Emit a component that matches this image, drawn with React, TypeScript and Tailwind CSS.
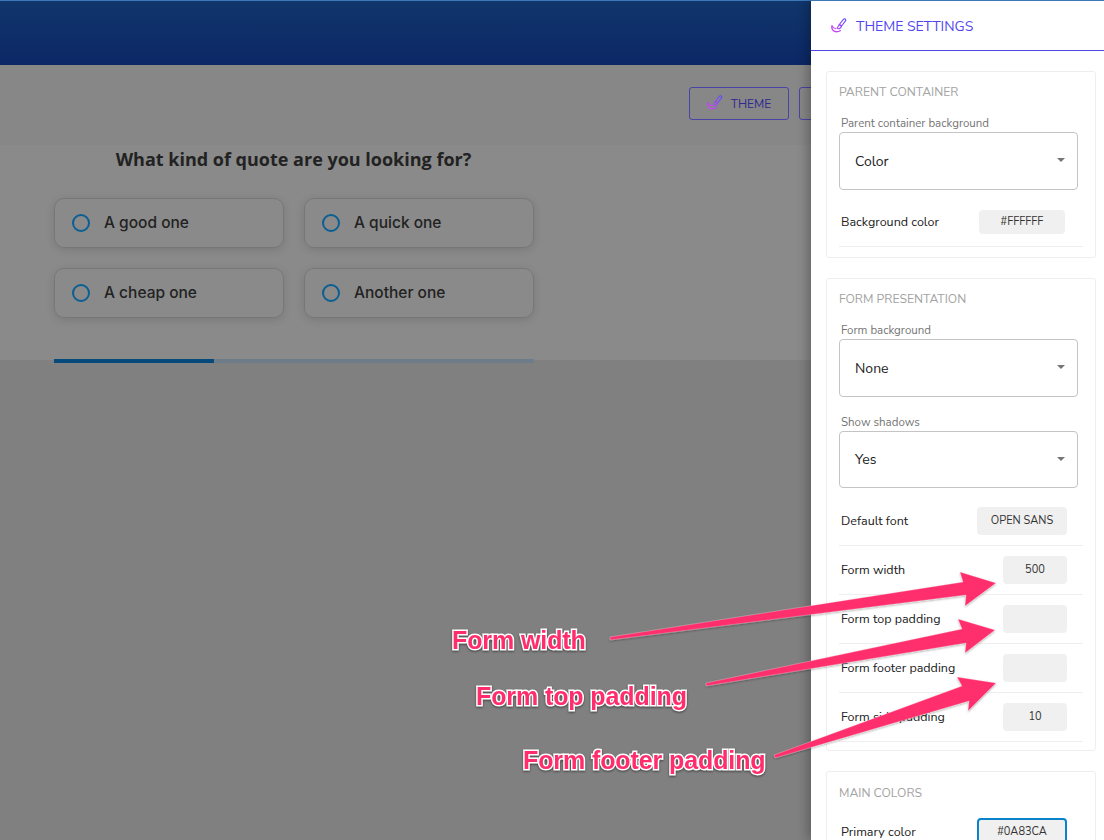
const panelFont = "font-['Nunito_Sans','Lato','Noto_Sans',sans-serif]";

function BrushIcon({ id, className }: { id: string; className?: string }) {
  return (
    <svg viewBox="0 0 16 17" fill="none" className={className}>
      <defs>
        <linearGradient id={id} x1="14" y1="1" x2="2" y2="15" gradientUnits="userSpaceOnUse">
          <stop offset="0" stopColor="#5b4bff" />
          <stop offset="1" stopColor="#d946ef" />
        </linearGradient>
      </defs>
      <g stroke={`url(#${id})`} strokeLinecap="round" strokeLinejoin="round">
        <path d="M12.6 1.2a1.3 1.3 0 0 1 2.1 1.4L10.6 8 8.3 6.5z" strokeWidth="1.1" />
        <path d="M8.3 6.5 10.6 8c-.4 1.7-1.7 2.7-3.5 2.7-.7 0-.9-.3-.7-.9z" strokeWidth="1.1" />
        <path d="M1 8c-.6 2.8 1 5.7 4.2 5.7 1.6 0 3-.3 4-1" strokeWidth="1.4" />
        <path d="M1 8c1 1.4 2.2 2.4 4 2.8" strokeWidth="1.1" />
      </g>
    </svg>
  );
}

function Option({ label }: { label: string }) {
  return (
    <div className="flex h-[50px] items-center rounded-[10px] border border-[#777777] pl-[17px] shadow-[0_2px_8px_rgba(0,0,0,0.12)]">
      <span className="h-[18px] w-[18px] rounded-full border-2 border-[#0b5f92]" />
      <span className="ml-[14px] font-['Inter',sans-serif] text-[15.5px] leading-none font-medium text-[#222222]">{label}</span>
    </div>
  );
}

function SelectField({ label, value, short, className }: { label: string; value: string; short?: boolean; className?: string }) {
  return (
    <div className={className}>
      <div className="mb-[2px] pl-[2px] text-[11.5px] leading-[13px] text-[#757575]">{label}</div>
      <div
        className={
          'flex w-[239px] items-center justify-between rounded-[4px] border border-[#c4c4c4] pr-[12px] pl-[15px] text-[14px] text-[#222222] ' +
          (short ? 'h-[57px]' : 'h-[58px]')
        }
      >
        <span>{value}</span>
        <span className="mb-[2px] h-0 w-0 border-x-[4px] border-t-[4px] border-x-transparent border-t-[#757575]" />
      </div>
    </div>
  );
}

function SettingRow({ label, value, wide, active, small }: { label: string; value?: string; wide?: boolean; active?: boolean; small?: boolean }) {
  return (
    <div className={'flex h-[49px] items-center justify-between border-b border-[#eeeeee] pl-[2px] ' + (small ? 'pr-[18px]' : 'pr-[16px]')}>
      <span className="text-[12.5px] text-[#222222]">{label}</span>
      <span
        className={
          'flex items-center justify-center rounded-[4px] text-[11px] text-[#333333] ' +
          (small ? 'h-[24px] w-[86px] ' : wide ? 'h-[28px] w-[90px] ' : 'h-[28px] w-[64px] ') +
          (active ? 'border-2 border-[#0a83ca] bg-[#f0f0f0]' : 'bg-[#f0f0f0]')
        }
      >
        {value}
      </span>
    </div>
  );
}

function SettingsCard({ title, children, className }: { title: string; children: React.ReactNode; className?: string }) {
  return (
    <section className={'w-[270px] rounded-[3px] border border-[#eeeeee] px-[12px] pt-[13px] ' + (className ?? '')}>
      <h3 className="text-[12.2px] leading-[15px] font-normal text-[#a3a3a3]">{title}</h3>
      {children}
    </section>
  );
}

function Arrows() {
  return (
    <svg className="pointer-events-none absolute inset-0 z-20 h-[840px] w-[1104px]" viewBox="0 0 1104 840">
      <defs>
        <filter id="arrow-shadow" x="-5%" y="-20%" width="110%" height="140%">
          <feDropShadow dx="0" dy="1" stdDeviation="1" floodColor="#000000" floodOpacity="0.35" />
        </filter>
      </defs>
      <g fill="#ff2d6c" stroke="#ffffff" strokeOpacity="0.55" strokeWidth="0.5" filter="url(#arrow-shadow)">
        <polygon points="610,637 963,582 960,572 996,583 965,606 966,595 610,640" />
        <polygon points="706,683 962,629 958,619 995,630 965,653 966,643 706,686" />
        <polygon points="774,755 962,686 957,677 996,683 968,711 969,701 775,758" />
      </g>
    </svg>
  );
}

function Callout({ text, className }: { text: string; className: string }) {
  return (
    <span
      className={
        "absolute z-30 font-['Liberation_Sans',sans-serif] text-[25px] leading-none font-bold tracking-[-0.1px] whitespace-nowrap text-[#ff2d6c] [-webkit-text-stroke:3px_#ffffff] [paint-order:stroke_fill] drop-shadow-[0_1px_1px_rgba(0,0,0,0.5)] " +
        className
      }
    >
      {text}
    </span>
  );
}

export default function App() {
  return (
    <div className="relative h-[840px] w-[1104px] overflow-hidden bg-[#808080]">
      <main className="flex h-full flex-col">
        <header className="h-[65px] border-t border-[#3c78b8] bg-gradient-to-b from-[#10366c] to-[#0d2766]" />
        <div className="flex h-[80px] items-start gap-[10px] bg-[#878787] pt-[22px] pl-[689px]">
          <button className="flex h-[33px] w-[100px] shrink-0 items-center justify-center gap-[8px] rounded-[3px] border border-[#4a44a8] text-[12px] text-[#30278f]">
            <BrushIcon id="theme-button-brush" className="h-[17px] w-[16px]" />
            <span className={panelFont}>THEME</span>
          </button>
          <button className="h-[33px] w-[100px] shrink-0 rounded-[3px] border border-[#4a44a8]" />
        </div>
        <div className="h-[215px] bg-[#8a8a8a] pl-[54px]">
          <div className="w-[480px]">
            <h2 className="pt-[2px] pr-[1px] text-center font-['Open_Sans',sans-serif] text-[18px] leading-[24px] font-bold text-[#222222]">
              What kind of quote are you looking for?
            </h2>
            <div className="mt-[27px] grid grid-cols-2 gap-x-[20px] gap-y-[20px]">
              <Option label="A good one" />
              <Option label="A quick one" />
              <Option label="A cheap one" />
              <Option label="Another one" />
            </div>
            <div className="mt-[41px] h-[4px] bg-[#6e7b88]">
              <div className="h-full w-1/3 bg-[#064a7c]" />
            </div>
          </div>
        </div>
      </main>

      <aside className={'absolute top-0 right-0 z-10 h-[840px] w-[293px] overflow-hidden bg-white shadow-[-4px_0_10px_rgba(0,0,0,0.25)] ' + panelFont}>
        <div className="h-px bg-[#3c78b8]" />
        <div className="flex h-[50px] items-center gap-[9px] border-b border-[#4f46e5] pt-[1px] pl-[20px]">
          <BrushIcon id="panel-brush" className="h-[17px] w-[16px]" />
          <span className="text-[14px] text-[#5046f0]">THEME SETTINGS</span>
        </div>
        <div className="flex flex-col gap-[20px] pt-[20px] pl-[15px]">
          <SettingsCard title="PARENT CONTAINER" className="h-[187px]">
            <SelectField label="Parent container background" value="Color" className="mt-[17px]" />
            <div className="mt-[8px]">
              <SettingRow label="Background color" value="#FFFFFF" small />
            </div>
          </SettingsCard>
          <SettingsCard title="FORM PRESENTATION" className="h-[473px]">
            <SelectField label="Form background" value="None" className="mt-[17px]" />
            <SelectField label="Show shadows" value="Yes" short className="mt-[19px]" />
            <div className="mt-[9px]">
              <SettingRow label="Default font" value="OPEN SANS" wide />
              <SettingRow label="Form width" value="500" />
              <SettingRow label="Form top padding" />
              <SettingRow label="Form footer padding" />
              <SettingRow label="Form side padding" value="10" />
            </div>
          </SettingsCard>
          <SettingsCard title="MAIN COLORS" className="h-[120px] !pt-[14px]">
            <div className="mt-[7px]">
              <SettingRow label="Primary color" value="#0A83CA" wide active />
            </div>
          </SettingsCard>
        </div>
      </aside>

      <Arrows />
      <Callout text="Form width" className="top-[628px] left-[452px]" />
      <Callout text="Form top padding" className="top-[684px] left-[476px]" />
      <Callout text="Form footer padding" className="top-[748px] left-[523px]" />
    </div>
  );
}
